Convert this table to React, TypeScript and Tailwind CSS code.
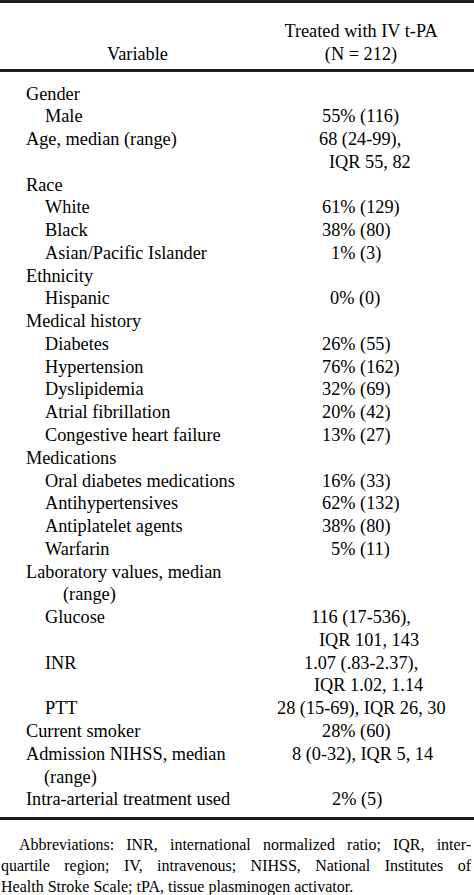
type Line = [string, string];

type Row = {
  label: Line[];
  value?: Line[];
};

// label x: 26 top level, 45 sub item; value column starts at 272
const rows: Row[] = [
  { label: [["Gender", "pl-[26px]"]] },
  { label: [["Male", "pl-[45px]"]], value: [["55% (116)", "pl-[50px]"]] },
  {
    label: [["Age, median (range)", "pl-[26px]"]],
    value: [
      ["68 (24-99),", "pl-[47px]"],
      ["IQR 55, 82", "pl-[57px]"],
    ],
  },
  { label: [["Race", "pl-[26px]"]] },
  { label: [["White", "pl-[45px]"]], value: [["61% (129)", "pl-[50px]"]] },
  { label: [["Black", "pl-[45px]"]], value: [["38% (80)", "pl-[50px]"]] },
  { label: [["Asian/Pacific Islander", "pl-[45px]"]], value: [["1% (3)", "pl-[59px]"]] },
  { label: [["Ethnicity", "pl-[26px]"]] },
  { label: [["Hispanic", "pl-[45px]"]], value: [["0% (0)", "pl-[58px]"]] },
  { label: [["Medical history", "pl-[26px]"]] },
  { label: [["Diabetes", "pl-[45px]"]], value: [["26% (55)", "pl-[50px]"]] },
  { label: [["Hypertension", "pl-[45px]"]], value: [["76% (162)", "pl-[50px]"]] },
  { label: [["Dyslipidemia", "pl-[45px]"]], value: [["32% (69)", "pl-[50px]"]] },
  { label: [["Atrial fibrillation", "pl-[45px]"]], value: [["20% (42)", "pl-[50px]"]] },
  { label: [["Congestive heart failure", "pl-[45px]"]], value: [["13% (27)", "pl-[50px]"]] },
  { label: [["Medications", "pl-[26px]"]] },
  { label: [["Oral diabetes medications", "pl-[45px]"]], value: [["16% (33)", "pl-[50px]"]] },
  { label: [["Antihypertensives", "pl-[45px]"]], value: [["62% (132)", "pl-[50px]"]] },
  { label: [["Antiplatelet agents", "pl-[45px]"]], value: [["38% (80)", "pl-[50px]"]] },
  { label: [["Warfarin", "pl-[45px]"]], value: [["5% (11)", "pl-[59px]"]] },
  {
    label: [
      ["Laboratory values, median", "pl-[26px]"],
      ["(range)", "pl-[63px]"],
    ],
  },
  {
    label: [["Glucose", "pl-[45px]"]],
    value: [
      ["116 (17-536),", "pl-[39px]"],
      ["IQR 101, 143", "pl-[47px]"],
    ],
  },
  {
    label: [["INR", "pl-[45px]"]],
    value: [
      ["1.07 (.83-2.37),", "pl-[32px]"],
      ["IQR 1.02, 1.14", "pl-[42px]"],
    ],
  },
  { label: [["PTT", "pl-[45px]"]], value: [["28 (15-69), IQR 26, 30", "pl-[5px]"]] },
  { label: [["Current smoker", "pl-[26px]"]], value: [["28% (60)", "pl-[50px]"]] },
  {
    label: [
      ["Admission NIHSS, median", "pl-[26px]"],
      ["(range)", "pl-[44px]"],
    ],
    value: [["8 (0-32), IQR 5, 14", "pl-[20px]"]],
  },
  { label: [["Intra-arterial treatment used", "pl-[26px]"]], value: [["2% (5)", "pl-[60px]"]] },
];

const Rule = () => <div className="h-[3px] w-full bg-[#1c1c1c]" />;

export default function App() {
  return (
    <div
      className="w-[474px] h-[895px] overflow-hidden bg-white text-black text-[18.3px] leading-[22.77px]"
      style={{ fontFamily: '"Liberation Serif", "Times New Roman", serif' }}
    >
      <Rule />

      {/* header */}
      <div className="flex items-end pt-[17px] pb-[3px]">
        <div className="w-[275px] shrink-0 text-center">Variable</div>
        <div className="flex-1 pr-[27px] text-center">
          <div>Treated with IV t-PA</div>
          <div>(N = 212)</div>
        </div>
      </div>

      <Rule />

      {/* body */}
      <div className="pt-[11px] pb-[6px]">
        {rows.map((r, i) => (
          <div key={i} className="flex">
            <div className="w-[272px] shrink-0">
              {r.label.map(([t, c], j) => (
                <div key={j} className={`${c} whitespace-nowrap`}>
                  {t}
                </div>
              ))}
            </div>
            <div className="flex-1">
              {r.value?.map(([t, c], j) => (
                <div key={j} className={`${c} whitespace-nowrap`}>
                  {t}
                </div>
              ))}
            </div>
          </div>
        ))}
      </div>

      <Rule />

      {/* footnote */}
      <div className="pt-[14px] pl-[1px] pr-[3px] text-[16px] leading-[21px]">
        <div className="pl-[18px] text-justify [text-align-last:justify]">
          Abbreviations: INR, international normalized ratio; IQR, inter-
        </div>
        <div className="text-justify [text-align-last:justify]">
          quartile region; IV, intravenous; NIHSS, National Institutes of
        </div>
        <div>Health Stroke Scale; tPA, tissue plasminogen activator.</div>
      </div>
    </div>
  );
}
